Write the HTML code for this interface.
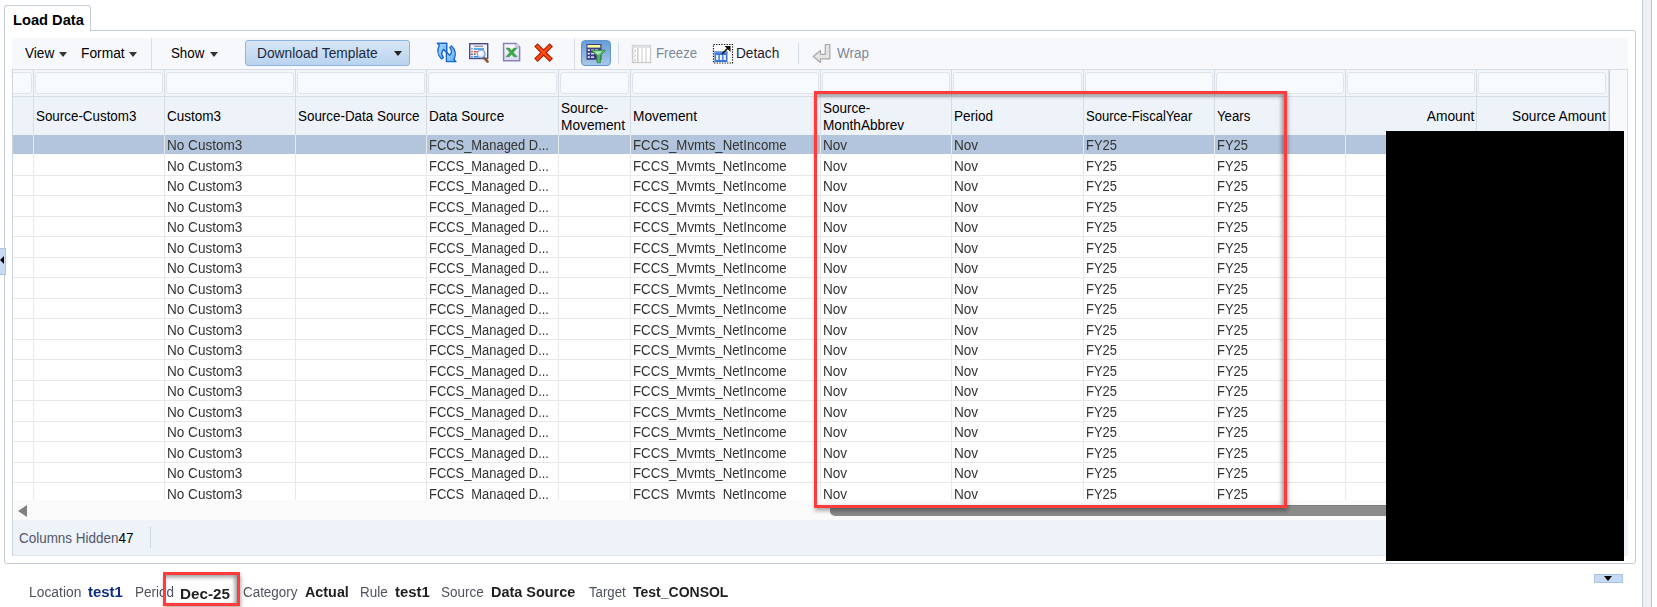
<!DOCTYPE html>
<html><head><meta charset="utf-8">
<style>
*{margin:0;padding:0;box-sizing:border-box}
html,body{width:1657px;height:607px;overflow:hidden;background:#fff;font-family:"Liberation Sans",sans-serif;font-size:13px;color:#000}
.a{position:absolute}
.t{position:absolute;white-space:nowrap;line-height:16px}
.vl{position:absolute;width:1px}
.hl{position:absolute;height:1px}
.arr{position:absolute;width:0;height:0;border-left:4.75px solid transparent;border-right:4.75px solid transparent;border-top:5.4px solid #333}
</style></head><body>

<div class="a" style="left:1642px;top:0;width:10px;height:607px;background:#edf1f6;border-left:1px solid #c6ced8;border-right:1px solid #b8c2cd"></div>
<div class="a" style="left:4px;top:30px;width:1632px;height:534px;border:1px solid #c5cdd7;border-radius:0 3px 3px 3px;background:#fff"></div>
<div class="a" style="left:4px;top:5px;width:87px;height:26px;border:1px solid #c5cdd7;border-bottom:none;border-radius:3px 3px 0 0;background:#fff"></div>
<div class="t" style="left:12.9px;top:12.15px;color:#000;font-size:14.0px;font-weight:bold;transform:scaleX(1.0464);transform-origin:0 0;">Load Data</div>
<div class="a" style="left:12px;top:38px;width:1616px;height:32px;background:#f7f8fb;border-radius:3px 3px 0 0"></div>
<div class="t" style="left:25px;top:45.15px;color:#000;font-size:14.0px;font-weight:normal;transform:scaleX(0.9714);transform-origin:0 0;">View</div>
<div class="arr" style="left:59px;top:52px"></div>
<div class="t" style="left:81px;top:45.15px;color:#000;font-size:14.0px;font-weight:normal;transform:scaleX(0.9857);transform-origin:0 0;">Format</div>
<div class="arr" style="left:129px;top:52px"></div>
<div class="vl" style="left:151px;top:38px;height:31px;background:#d8dee6"></div>
<div class="t" style="left:170.8px;top:45.15px;color:#000;font-size:14.0px;font-weight:normal;transform:scaleX(0.95);transform-origin:0 0;">Show</div>
<div class="arr" style="left:210px;top:52px"></div>
<div class="a" style="left:245px;top:40px;width:165px;height:26px;border:1px solid #8fb4dd;border-radius:3px;background:linear-gradient(#d7e6f6,#b9d3ef)"></div>
<div class="t" style="left:257px;top:45.15px;color:#1a2a40;font-size:14.0px;font-weight:normal;transform:scaleX(0.9829);transform-origin:0 0;">Download Template</div>
<div class="arr" style="left:394px;top:51px;border-top-color:#222"></div>
<div class="vl" style="left:574px;top:38px;height:31px;background:#d8dee6"></div>
<div class="a" style="left:581px;top:40px;width:30px;height:26px;border:1px solid #6196d0;border-radius:4px;background:linear-gradient(#679dd7,#a9c7e7)"></div>
<div class="vl" style="left:618px;top:43px;height:21px;background:#d5dde6"></div>
<div class="t" style="left:656px;top:45.15px;color:#7c8799;font-size:14.0px;font-weight:normal;transform:scaleX(0.9429);transform-origin:0 0;">Freeze</div>
<div class="t" style="left:736.3px;top:45.15px;color:#1b1b33;font-size:14.0px;font-weight:normal;transform:scaleX(0.9757);transform-origin:0 0;">Detach</div>
<div class="vl" style="left:798px;top:43px;height:21px;background:#d5dde6"></div>
<div class="t" style="left:836.5px;top:45.15px;color:#7c8799;font-size:14.0px;font-weight:normal;transform:scaleX(0.9621);transform-origin:0 0;">Wrap</div>
<svg class="a" style="left:435px;top:41px" width="24" height="23" viewBox="0 0 24 23">
<defs><linearGradient id="rg" x1="0" y1="0" x2="1" y2="1"><stop offset="0" stop-color="#b4dcff"/><stop offset="1" stop-color="#58aaf2"/></linearGradient></defs>
<path d="M2.3 2.3 H11.8 V11.8 L8.6 8.6 C6.2 11 6.3 14 8.4 16.4 L6.6 18 C2.4 14 2 8.5 4.3 4.3 Z" fill="url(#rg)" stroke="#1767cc" stroke-width="1.4" stroke-linejoin="round"/>
<path d="M20.9 20.6 H11.4 V11.1 L14.6 14.3 C17 11.9 16.9 8.9 14.8 6.5 L16.6 4.9 C20.8 8.9 21.2 14.4 18.9 18.6 Z" fill="url(#rg)" stroke="#1767cc" stroke-width="1.4" stroke-linejoin="round"/>
</svg>
<svg class="a" style="left:468px;top:42px" width="22" height="22" viewBox="0 0 22 22">
<rect x="1.7" y="1.7" width="18" height="14.8" fill="#f1f0fb" stroke="#4a4888" stroke-width="1.4"/>
<rect x="6" y="3.6" width="9" height="1.4" fill="#9a9a9a"/>
<rect x="3.2" y="6.3" width="1.5" height="1.3" fill="#2a8ce0"/><rect x="6" y="6.3" width="10" height="1.4" fill="#2a8ce0"/>
<rect x="3.2" y="9" width="1.5" height="1.3" fill="#f05a3a"/><rect x="6" y="9" width="4" height="1.4" fill="#f05a3a"/>
<rect x="3.2" y="11.5" width="1.5" height="1.3" fill="#333"/><rect x="6" y="11.5" width="1.5" height="1.3" fill="#333"/>
<rect x="3.2" y="14" width="1.5" height="1.3" fill="#2a8ce0"/><rect x="6" y="14" width="4" height="1.4" fill="#2a8ce0"/>
<defs><radialGradient id="mg" cx="0.4" cy="0.4" r="0.7"><stop offset="0" stop-color="#ffffff"/><stop offset="0.6" stop-color="#dfe9f8"/><stop offset="1" stop-color="#5b8fd6"/></radialGradient></defs>
<line x1="16" y1="15.8" x2="19.6" y2="19.6" stroke="#8d5634" stroke-width="2.6" stroke-linecap="round"/>
<circle cx="13.2" cy="12" r="4" fill="url(#mg)" stroke="#5d8fd4" stroke-width="0.8"/>
</svg>
<svg class="a" style="left:502px;top:42px" width="20" height="21" viewBox="0 0 20 21">
<defs><linearGradient id="xg" x1="0" y1="0" x2="0" y2="1"><stop offset="0" stop-color="#fafaff"/><stop offset="1" stop-color="#dcdcf0"/></linearGradient></defs>
<path d="M1.6 1.5 H14 L17.6 5 V18.8 H1.6 Z" fill="url(#xg)" stroke="#8682bd" stroke-width="1.5"/>
<path d="M14 1.5 V5 H17.6" fill="#fff" stroke="#8682bd" stroke-width="0.8"/>
<path d="M4 6 H7.3 L9.6 8.6 L11.9 6 H15.2 L11.3 10.4 L15.2 14.8 H11.9 L9.6 12.2 L7.3 14.8 H4 L7.9 10.4 Z" fill="#3caa48" stroke="#2d8a3a" stroke-width="0.5"/>
</svg>
<svg class="a" style="left:534px;top:43px" width="19" height="19" viewBox="0 0 19 19">
<path d="M3.6 3.6 L15.6 15.6 M15.6 3.6 L3.6 15.6" stroke="#b01800" stroke-width="4.8" stroke-linecap="square"/>
<path d="M3.6 3.6 L15.6 15.6 M15.6 3.6 L3.6 15.6" stroke="#ff4c0c" stroke-width="2.7" stroke-linecap="square"/>
</svg>
<svg class="a" style="left:585px;top:43px" width="22" height="22" viewBox="0 0 22 22">
<rect x="1.5" y="1" width="15" height="15.8" fill="#3e3d82"/>
<rect x="2.5" y="2" width="12.8" height="2.6" fill="#fdfd9a"/>
<rect x="2.8" y="6.3" width="2" height="1.6" fill="#fff"/><rect x="6" y="6.3" width="3" height="1.6" fill="#ddd"/><rect x="10" y="6.3" width="3" height="1.6" fill="#ddd"/>
<rect x="2.8" y="9.8" width="2" height="1.6" fill="#fff"/><rect x="6" y="9.8" width="3" height="1.6" fill="#ddd"/>
<rect x="2.8" y="13.3" width="2" height="1.6" fill="#fff"/><rect x="6" y="13.3" width="3" height="1.6" fill="#ddd"/>
<path d="M6 7.2 H20.6 L15.4 12.6 V19.8 H12 V12.6 Z" fill="#52b860" stroke="#2f8a40" stroke-width="0.8" stroke-linejoin="round"/>
<path d="M9 8.3 H17 L14 11.5 H12 Z" fill="#c8f0cc" opacity=".8"/>
</svg>
<svg class="a" style="left:631px;top:44px" width="21" height="20" viewBox="0 0 21 20">
<rect x="1.5" y="1.5" width="18" height="17" fill="#fff" stroke="#cacaca" stroke-width="1.3"/>
<rect x="1.5" y="1.5" width="18" height="2.5" fill="#e2e2e2"/>
<rect x="6" y="4" width="1.6" height="14.5" fill="#d0d0d0"/><rect x="10.3" y="4" width="1.3" height="14.5" fill="#d4d4d4"/><rect x="14.3" y="4" width="1.3" height="14.5" fill="#d4d4d4"/>
<path d="M2.5 5.5 L5 7 L2.5 8.5 M2.5 10 L5 11.5 L2.5 13 M2.5 14.5 L5 16 L2.5 17.5" fill="none" stroke="#bdbdbd" stroke-width="0.8"/>
</svg>
<svg class="a" style="left:712px;top:43px" width="22" height="21" viewBox="0 0 22 21">
<rect x="1.5" y="1.5" width="19" height="18.5" fill="#fff" stroke="#111" stroke-width="1.2" stroke-dasharray="1.3 1.3"/>
<rect x="2.5" y="8.5" width="13" height="10.5" fill="#3b74d8"/>
<rect x="2.5" y="8.5" width="13" height="1.8" fill="#5d90e8"/>
<rect x="4" y="12" width="2.4" height="5" fill="#e9f0ff"/><rect x="7.8" y="12" width="2.4" height="5" fill="#e9f0ff"/><rect x="11.5" y="12" width="2.4" height="5" fill="#e9f0ff"/>
<path d="M10 11 L16.5 4.5" stroke="#111" stroke-width="1.6"/>
<path d="M12.5 3 H18.5 V9 Z" fill="#111"/>
</svg>
<svg class="a" style="left:812px;top:43px" width="20" height="21" viewBox="0 0 20 21">
<path d="M13.3 1.5 H17.8 V15.8 H8.5 V19.5 L1.2 13.5 L8.5 7.5 V11.3 H13.3 Z" fill="#e4e4e4" stroke="#a8a8a8" stroke-width="1.2" stroke-linejoin="round"/>
</svg>
<div class="a" style="left:12px;top:69px;width:1616px;height:28px;background:#f2f5fa;border-top:1px solid #d6dde5;border-bottom:1px solid #d6dde5"></div>
<div class="a" style="left:12px;top:97px;width:1597px;height:38px;background:#eef2f9"></div>
<div class="a" style="left:1610px;top:70px;width:18px;height:430px;background:#f7f9fc;border-right:1px solid #d6dde5"></div>
<div class="vl" style="left:12px;top:69px;height:487px;background:#cdd6e0"></div>
<div class="a" style="left:5px;top:72px;width:27px;height:22px;background:#f8fbfe;border:1px solid #dfe4ea;border-radius:3px"></div>
<div class="a" style="left:35px;top:72px;width:128px;height:22px;background:#f8fbfe;border:1px solid #dfe4ea;border-radius:3px"></div>
<div class="a" style="left:166px;top:72px;width:128px;height:22px;background:#f8fbfe;border:1px solid #dfe4ea;border-radius:3px"></div>
<div class="a" style="left:297px;top:72px;width:128px;height:22px;background:#f8fbfe;border:1px solid #dfe4ea;border-radius:3px"></div>
<div class="a" style="left:428px;top:72px;width:129px;height:22px;background:#f8fbfe;border:1px solid #dfe4ea;border-radius:3px"></div>
<div class="a" style="left:560px;top:72px;width:69px;height:22px;background:#f8fbfe;border:1px solid #dfe4ea;border-radius:3px"></div>
<div class="a" style="left:632px;top:72px;width:187px;height:22px;background:#f8fbfe;border:1px solid #dfe4ea;border-radius:3px"></div>
<div class="a" style="left:822px;top:72px;width:128px;height:22px;background:#f8fbfe;border:1px solid #dfe4ea;border-radius:3px"></div>
<div class="a" style="left:953px;top:72px;width:129px;height:22px;background:#f8fbfe;border:1px solid #dfe4ea;border-radius:3px"></div>
<div class="a" style="left:1085px;top:72px;width:128px;height:22px;background:#f8fbfe;border:1px solid #dfe4ea;border-radius:3px"></div>
<div class="a" style="left:1216px;top:72px;width:128px;height:22px;background:#f8fbfe;border:1px solid #dfe4ea;border-radius:3px"></div>
<div class="a" style="left:1347px;top:72px;width:128px;height:22px;background:#f8fbfe;border:1px solid #dfe4ea;border-radius:3px"></div>
<div class="a" style="left:1478px;top:72px;width:128px;height:22px;background:#f8fbfe;border:1px solid #dfe4ea;border-radius:3px"></div>
<div class="a" style="left:5px;top:70px;width:7px;height:27px;background:#fff"></div>
<div class="vl" style="left:12px;top:69px;height:487px;background:#cdd6e0"></div>
<div class="a" style="left:13px;top:135px;width:1596px;height:365px;background:#fff"></div>
<div class="a" style="left:13px;top:134.5px;width:1596px;height:19.5px;background:#b3c5dc"></div>
<div class="hl" style="left:13px;top:174.9px;width:1596px;background:#e8e8e8"></div>
<div class="hl" style="left:13px;top:195.4px;width:1596px;background:#e8e8e8"></div>
<div class="hl" style="left:13px;top:215.9px;width:1596px;background:#e8e8e8"></div>
<div class="hl" style="left:13px;top:236.4px;width:1596px;background:#e8e8e8"></div>
<div class="hl" style="left:13px;top:256.9px;width:1596px;background:#e8e8e8"></div>
<div class="hl" style="left:13px;top:277.4px;width:1596px;background:#e8e8e8"></div>
<div class="hl" style="left:13px;top:297.9px;width:1596px;background:#e8e8e8"></div>
<div class="hl" style="left:13px;top:318.4px;width:1596px;background:#e8e8e8"></div>
<div class="hl" style="left:13px;top:338.9px;width:1596px;background:#e8e8e8"></div>
<div class="hl" style="left:13px;top:359.4px;width:1596px;background:#e8e8e8"></div>
<div class="hl" style="left:13px;top:379.9px;width:1596px;background:#e8e8e8"></div>
<div class="hl" style="left:13px;top:400.4px;width:1596px;background:#e8e8e8"></div>
<div class="hl" style="left:13px;top:420.9px;width:1596px;background:#e8e8e8"></div>
<div class="hl" style="left:13px;top:441.4px;width:1596px;background:#e8e8e8"></div>
<div class="hl" style="left:13px;top:461.9px;width:1596px;background:#e8e8e8"></div>
<div class="hl" style="left:13px;top:482.4px;width:1596px;background:#e8e8e8"></div>
<div class="hl" style="left:13px;top:502.9px;width:1596px;background:#e8e8e8"></div>
<div class="vl" style="left:33px;top:70px;height:65px;background:#d6dde5"></div>
<div class="vl" style="left:33px;top:135px;height:365px;background:#e8e8e8"></div>
<div class="vl" style="left:164px;top:70px;height:65px;background:#d6dde5"></div>
<div class="vl" style="left:164px;top:135px;height:365px;background:#e8e8e8"></div>
<div class="vl" style="left:295px;top:70px;height:65px;background:#d6dde5"></div>
<div class="vl" style="left:295px;top:135px;height:365px;background:#e8e8e8"></div>
<div class="vl" style="left:426px;top:70px;height:65px;background:#d6dde5"></div>
<div class="vl" style="left:426px;top:135px;height:365px;background:#e8e8e8"></div>
<div class="vl" style="left:558px;top:70px;height:65px;background:#d6dde5"></div>
<div class="vl" style="left:558px;top:135px;height:365px;background:#e8e8e8"></div>
<div class="vl" style="left:630px;top:70px;height:65px;background:#d6dde5"></div>
<div class="vl" style="left:630px;top:135px;height:365px;background:#e8e8e8"></div>
<div class="vl" style="left:820px;top:70px;height:65px;background:#d6dde5"></div>
<div class="vl" style="left:820px;top:135px;height:365px;background:#e8e8e8"></div>
<div class="vl" style="left:951px;top:70px;height:65px;background:#d6dde5"></div>
<div class="vl" style="left:951px;top:135px;height:365px;background:#e8e8e8"></div>
<div class="vl" style="left:1083px;top:70px;height:65px;background:#d6dde5"></div>
<div class="vl" style="left:1083px;top:135px;height:365px;background:#e8e8e8"></div>
<div class="vl" style="left:1214px;top:70px;height:65px;background:#d6dde5"></div>
<div class="vl" style="left:1214px;top:135px;height:365px;background:#e8e8e8"></div>
<div class="vl" style="left:1345px;top:70px;height:65px;background:#d6dde5"></div>
<div class="vl" style="left:1345px;top:135px;height:365px;background:#e8e8e8"></div>
<div class="vl" style="left:1476px;top:70px;height:65px;background:#d6dde5"></div>
<div class="vl" style="left:1476px;top:135px;height:365px;background:#e8e8e8"></div>
<div class="vl" style="left:1609px;top:70px;height:65px;background:#d6dde5"></div>
<div class="vl" style="left:1609px;top:135px;height:365px;background:#e8e8e8"></div>
<div class="vl" style="left:1609px;top:70px;height:430px;background:#c8d0d9"></div>
<div class="vl" style="left:1608px;top:70px;height:430px;background:#dde3ea"></div>
<div class="t" style="left:36.0px;top:108.15px;color:#000;font-size:14.0px;font-weight:normal;transform:scaleX(0.9557);transform-origin:0 0;">Source-Custom3</div>
<div class="t" style="left:167.0px;top:108.15px;color:#000;font-size:14.0px;font-weight:normal;transform:scaleX(0.965);transform-origin:0 0;">Custom3</div>
<div class="t" style="left:298.0px;top:108.15px;color:#000;font-size:14.0px;font-weight:normal;transform:scaleX(0.9571);transform-origin:0 0;">Source-Data Source</div>
<div class="t" style="left:429.0px;top:108.15px;color:#000;font-size:14.0px;font-weight:normal;transform:scaleX(0.9657);transform-origin:0 0;">Data Source</div>
<div class="t" style="left:561.0px;top:100.15px;color:#000;font-size:14.0px;font-weight:normal;transform:scaleX(0.9643);transform-origin:0 0;">Source-</div>
<div class="t" style="left:561.0px;top:116.95px;color:#000;font-size:14.0px;font-weight:normal;transform:scaleX(0.9786);transform-origin:0 0;">Movement</div>
<div class="t" style="left:633.0px;top:108.15px;color:#000;font-size:14.0px;font-weight:normal;transform:scaleX(0.9786);transform-origin:0 0;">Movement</div>
<div class="t" style="left:823.0px;top:100.15px;color:#000;font-size:14.0px;font-weight:normal;transform:scaleX(0.9643);transform-origin:0 0;">Source-</div>
<div class="t" style="left:823.0px;top:116.95px;color:#000;font-size:14.0px;font-weight:normal;transform:scaleX(0.9743);transform-origin:0 0;">MonthAbbrev</div>
<div class="t" style="left:954.0px;top:108.15px;color:#000;font-size:14.0px;font-weight:normal;transform:scaleX(0.9664);transform-origin:0 0;">Period</div>
<div class="t" style="left:1086.0px;top:108.15px;color:#000;font-size:14.0px;font-weight:normal;transform:scaleX(0.9329);transform-origin:0 0;">Source-FiscalYear</div>
<div class="t" style="left:1217.0px;top:108.15px;color:#000;font-size:14.0px;font-weight:normal;transform:scaleX(0.945);transform-origin:0 0;">Years</div>
<div class="t" style="right:182.5px;top:108.15px;color:#000;font-size:14.0px;font-weight:normal;transform:scaleX(0.9857);transform-origin:100% 0;">Amount</div>
<div class="t" style="right:51.5px;top:108.15px;color:#000;font-size:14.0px;font-weight:normal;transform:scaleX(0.9779);transform-origin:100% 0;">Source Amount</div>
<div class="a" style="left:0;top:0;width:1657px;height:607px;will-change:transform">
<div class="t" style="left:167.0px;top:137.15px;color:#333;font-size:14.0px;font-weight:normal;transform:scaleX(0.9686);transform-origin:0 0;">No Custom3</div>
<div class="t" style="left:429.0px;top:137.15px;color:#333;font-size:14.0px;font-weight:normal;transform:scaleX(0.9229);transform-origin:0 0;">FCCS_Managed D...</div>
<div class="t" style="left:633.0px;top:137.15px;color:#333;font-size:14.0px;font-weight:normal;transform:scaleX(0.945);transform-origin:0 0;">FCCS_Mvmts_NetIncome</div>
<div class="t" style="left:823.0px;top:137.15px;color:#333;font-size:14.0px;font-weight:normal;transform:scaleX(0.9707);transform-origin:0 0;">Nov</div>
<div class="t" style="left:954.0px;top:137.15px;color:#333;font-size:14.0px;font-weight:normal;transform:scaleX(0.9707);transform-origin:0 0;">Nov</div>
<div class="t" style="left:1086.0px;top:137.15px;color:#333;font-size:14.0px;font-weight:normal;transform:scaleX(0.9214);transform-origin:0 0;">FY25</div>
<div class="t" style="left:1217.0px;top:137.15px;color:#333;font-size:14.0px;font-weight:normal;transform:scaleX(0.9214);transform-origin:0 0;">FY25</div>
<div class="t" style="left:167.0px;top:157.65px;color:#333;font-size:14.0px;font-weight:normal;transform:scaleX(0.9686);transform-origin:0 0;">No Custom3</div>
<div class="t" style="left:429.0px;top:157.65px;color:#333;font-size:14.0px;font-weight:normal;transform:scaleX(0.9229);transform-origin:0 0;">FCCS_Managed D...</div>
<div class="t" style="left:633.0px;top:157.65px;color:#333;font-size:14.0px;font-weight:normal;transform:scaleX(0.945);transform-origin:0 0;">FCCS_Mvmts_NetIncome</div>
<div class="t" style="left:823.0px;top:157.65px;color:#333;font-size:14.0px;font-weight:normal;transform:scaleX(0.9707);transform-origin:0 0;">Nov</div>
<div class="t" style="left:954.0px;top:157.65px;color:#333;font-size:14.0px;font-weight:normal;transform:scaleX(0.9707);transform-origin:0 0;">Nov</div>
<div class="t" style="left:1086.0px;top:157.65px;color:#333;font-size:14.0px;font-weight:normal;transform:scaleX(0.9214);transform-origin:0 0;">FY25</div>
<div class="t" style="left:1217.0px;top:157.65px;color:#333;font-size:14.0px;font-weight:normal;transform:scaleX(0.9214);transform-origin:0 0;">FY25</div>
<div class="t" style="left:167.0px;top:178.15px;color:#333;font-size:14.0px;font-weight:normal;transform:scaleX(0.9686);transform-origin:0 0;">No Custom3</div>
<div class="t" style="left:429.0px;top:178.15px;color:#333;font-size:14.0px;font-weight:normal;transform:scaleX(0.9229);transform-origin:0 0;">FCCS_Managed D...</div>
<div class="t" style="left:633.0px;top:178.15px;color:#333;font-size:14.0px;font-weight:normal;transform:scaleX(0.945);transform-origin:0 0;">FCCS_Mvmts_NetIncome</div>
<div class="t" style="left:823.0px;top:178.15px;color:#333;font-size:14.0px;font-weight:normal;transform:scaleX(0.9707);transform-origin:0 0;">Nov</div>
<div class="t" style="left:954.0px;top:178.15px;color:#333;font-size:14.0px;font-weight:normal;transform:scaleX(0.9707);transform-origin:0 0;">Nov</div>
<div class="t" style="left:1086.0px;top:178.15px;color:#333;font-size:14.0px;font-weight:normal;transform:scaleX(0.9214);transform-origin:0 0;">FY25</div>
<div class="t" style="left:1217.0px;top:178.15px;color:#333;font-size:14.0px;font-weight:normal;transform:scaleX(0.9214);transform-origin:0 0;">FY25</div>
<div class="t" style="left:167.0px;top:198.65px;color:#333;font-size:14.0px;font-weight:normal;transform:scaleX(0.9686);transform-origin:0 0;">No Custom3</div>
<div class="t" style="left:429.0px;top:198.65px;color:#333;font-size:14.0px;font-weight:normal;transform:scaleX(0.9229);transform-origin:0 0;">FCCS_Managed D...</div>
<div class="t" style="left:633.0px;top:198.65px;color:#333;font-size:14.0px;font-weight:normal;transform:scaleX(0.945);transform-origin:0 0;">FCCS_Mvmts_NetIncome</div>
<div class="t" style="left:823.0px;top:198.65px;color:#333;font-size:14.0px;font-weight:normal;transform:scaleX(0.9707);transform-origin:0 0;">Nov</div>
<div class="t" style="left:954.0px;top:198.65px;color:#333;font-size:14.0px;font-weight:normal;transform:scaleX(0.9707);transform-origin:0 0;">Nov</div>
<div class="t" style="left:1086.0px;top:198.65px;color:#333;font-size:14.0px;font-weight:normal;transform:scaleX(0.9214);transform-origin:0 0;">FY25</div>
<div class="t" style="left:1217.0px;top:198.65px;color:#333;font-size:14.0px;font-weight:normal;transform:scaleX(0.9214);transform-origin:0 0;">FY25</div>
<div class="t" style="left:167.0px;top:219.15px;color:#333;font-size:14.0px;font-weight:normal;transform:scaleX(0.9686);transform-origin:0 0;">No Custom3</div>
<div class="t" style="left:429.0px;top:219.15px;color:#333;font-size:14.0px;font-weight:normal;transform:scaleX(0.9229);transform-origin:0 0;">FCCS_Managed D...</div>
<div class="t" style="left:633.0px;top:219.15px;color:#333;font-size:14.0px;font-weight:normal;transform:scaleX(0.945);transform-origin:0 0;">FCCS_Mvmts_NetIncome</div>
<div class="t" style="left:823.0px;top:219.15px;color:#333;font-size:14.0px;font-weight:normal;transform:scaleX(0.9707);transform-origin:0 0;">Nov</div>
<div class="t" style="left:954.0px;top:219.15px;color:#333;font-size:14.0px;font-weight:normal;transform:scaleX(0.9707);transform-origin:0 0;">Nov</div>
<div class="t" style="left:1086.0px;top:219.15px;color:#333;font-size:14.0px;font-weight:normal;transform:scaleX(0.9214);transform-origin:0 0;">FY25</div>
<div class="t" style="left:1217.0px;top:219.15px;color:#333;font-size:14.0px;font-weight:normal;transform:scaleX(0.9214);transform-origin:0 0;">FY25</div>
<div class="t" style="left:167.0px;top:239.65px;color:#333;font-size:14.0px;font-weight:normal;transform:scaleX(0.9686);transform-origin:0 0;">No Custom3</div>
<div class="t" style="left:429.0px;top:239.65px;color:#333;font-size:14.0px;font-weight:normal;transform:scaleX(0.9229);transform-origin:0 0;">FCCS_Managed D...</div>
<div class="t" style="left:633.0px;top:239.65px;color:#333;font-size:14.0px;font-weight:normal;transform:scaleX(0.945);transform-origin:0 0;">FCCS_Mvmts_NetIncome</div>
<div class="t" style="left:823.0px;top:239.65px;color:#333;font-size:14.0px;font-weight:normal;transform:scaleX(0.9707);transform-origin:0 0;">Nov</div>
<div class="t" style="left:954.0px;top:239.65px;color:#333;font-size:14.0px;font-weight:normal;transform:scaleX(0.9707);transform-origin:0 0;">Nov</div>
<div class="t" style="left:1086.0px;top:239.65px;color:#333;font-size:14.0px;font-weight:normal;transform:scaleX(0.9214);transform-origin:0 0;">FY25</div>
<div class="t" style="left:1217.0px;top:239.65px;color:#333;font-size:14.0px;font-weight:normal;transform:scaleX(0.9214);transform-origin:0 0;">FY25</div>
<div class="t" style="left:167.0px;top:260.15px;color:#333;font-size:14.0px;font-weight:normal;transform:scaleX(0.9686);transform-origin:0 0;">No Custom3</div>
<div class="t" style="left:429.0px;top:260.15px;color:#333;font-size:14.0px;font-weight:normal;transform:scaleX(0.9229);transform-origin:0 0;">FCCS_Managed D...</div>
<div class="t" style="left:633.0px;top:260.15px;color:#333;font-size:14.0px;font-weight:normal;transform:scaleX(0.945);transform-origin:0 0;">FCCS_Mvmts_NetIncome</div>
<div class="t" style="left:823.0px;top:260.15px;color:#333;font-size:14.0px;font-weight:normal;transform:scaleX(0.9707);transform-origin:0 0;">Nov</div>
<div class="t" style="left:954.0px;top:260.15px;color:#333;font-size:14.0px;font-weight:normal;transform:scaleX(0.9707);transform-origin:0 0;">Nov</div>
<div class="t" style="left:1086.0px;top:260.15px;color:#333;font-size:14.0px;font-weight:normal;transform:scaleX(0.9214);transform-origin:0 0;">FY25</div>
<div class="t" style="left:1217.0px;top:260.15px;color:#333;font-size:14.0px;font-weight:normal;transform:scaleX(0.9214);transform-origin:0 0;">FY25</div>
<div class="t" style="left:167.0px;top:280.65px;color:#333;font-size:14.0px;font-weight:normal;transform:scaleX(0.9686);transform-origin:0 0;">No Custom3</div>
<div class="t" style="left:429.0px;top:280.65px;color:#333;font-size:14.0px;font-weight:normal;transform:scaleX(0.9229);transform-origin:0 0;">FCCS_Managed D...</div>
<div class="t" style="left:633.0px;top:280.65px;color:#333;font-size:14.0px;font-weight:normal;transform:scaleX(0.945);transform-origin:0 0;">FCCS_Mvmts_NetIncome</div>
<div class="t" style="left:823.0px;top:280.65px;color:#333;font-size:14.0px;font-weight:normal;transform:scaleX(0.9707);transform-origin:0 0;">Nov</div>
<div class="t" style="left:954.0px;top:280.65px;color:#333;font-size:14.0px;font-weight:normal;transform:scaleX(0.9707);transform-origin:0 0;">Nov</div>
<div class="t" style="left:1086.0px;top:280.65px;color:#333;font-size:14.0px;font-weight:normal;transform:scaleX(0.9214);transform-origin:0 0;">FY25</div>
<div class="t" style="left:1217.0px;top:280.65px;color:#333;font-size:14.0px;font-weight:normal;transform:scaleX(0.9214);transform-origin:0 0;">FY25</div>
<div class="t" style="left:167.0px;top:301.15px;color:#333;font-size:14.0px;font-weight:normal;transform:scaleX(0.9686);transform-origin:0 0;">No Custom3</div>
<div class="t" style="left:429.0px;top:301.15px;color:#333;font-size:14.0px;font-weight:normal;transform:scaleX(0.9229);transform-origin:0 0;">FCCS_Managed D...</div>
<div class="t" style="left:633.0px;top:301.15px;color:#333;font-size:14.0px;font-weight:normal;transform:scaleX(0.945);transform-origin:0 0;">FCCS_Mvmts_NetIncome</div>
<div class="t" style="left:823.0px;top:301.15px;color:#333;font-size:14.0px;font-weight:normal;transform:scaleX(0.9707);transform-origin:0 0;">Nov</div>
<div class="t" style="left:954.0px;top:301.15px;color:#333;font-size:14.0px;font-weight:normal;transform:scaleX(0.9707);transform-origin:0 0;">Nov</div>
<div class="t" style="left:1086.0px;top:301.15px;color:#333;font-size:14.0px;font-weight:normal;transform:scaleX(0.9214);transform-origin:0 0;">FY25</div>
<div class="t" style="left:1217.0px;top:301.15px;color:#333;font-size:14.0px;font-weight:normal;transform:scaleX(0.9214);transform-origin:0 0;">FY25</div>
<div class="t" style="left:167.0px;top:321.65px;color:#333;font-size:14.0px;font-weight:normal;transform:scaleX(0.9686);transform-origin:0 0;">No Custom3</div>
<div class="t" style="left:429.0px;top:321.65px;color:#333;font-size:14.0px;font-weight:normal;transform:scaleX(0.9229);transform-origin:0 0;">FCCS_Managed D...</div>
<div class="t" style="left:633.0px;top:321.65px;color:#333;font-size:14.0px;font-weight:normal;transform:scaleX(0.945);transform-origin:0 0;">FCCS_Mvmts_NetIncome</div>
<div class="t" style="left:823.0px;top:321.65px;color:#333;font-size:14.0px;font-weight:normal;transform:scaleX(0.9707);transform-origin:0 0;">Nov</div>
<div class="t" style="left:954.0px;top:321.65px;color:#333;font-size:14.0px;font-weight:normal;transform:scaleX(0.9707);transform-origin:0 0;">Nov</div>
<div class="t" style="left:1086.0px;top:321.65px;color:#333;font-size:14.0px;font-weight:normal;transform:scaleX(0.9214);transform-origin:0 0;">FY25</div>
<div class="t" style="left:1217.0px;top:321.65px;color:#333;font-size:14.0px;font-weight:normal;transform:scaleX(0.9214);transform-origin:0 0;">FY25</div>
<div class="t" style="left:167.0px;top:342.15px;color:#333;font-size:14.0px;font-weight:normal;transform:scaleX(0.9686);transform-origin:0 0;">No Custom3</div>
<div class="t" style="left:429.0px;top:342.15px;color:#333;font-size:14.0px;font-weight:normal;transform:scaleX(0.9229);transform-origin:0 0;">FCCS_Managed D...</div>
<div class="t" style="left:633.0px;top:342.15px;color:#333;font-size:14.0px;font-weight:normal;transform:scaleX(0.945);transform-origin:0 0;">FCCS_Mvmts_NetIncome</div>
<div class="t" style="left:823.0px;top:342.15px;color:#333;font-size:14.0px;font-weight:normal;transform:scaleX(0.9707);transform-origin:0 0;">Nov</div>
<div class="t" style="left:954.0px;top:342.15px;color:#333;font-size:14.0px;font-weight:normal;transform:scaleX(0.9707);transform-origin:0 0;">Nov</div>
<div class="t" style="left:1086.0px;top:342.15px;color:#333;font-size:14.0px;font-weight:normal;transform:scaleX(0.9214);transform-origin:0 0;">FY25</div>
<div class="t" style="left:1217.0px;top:342.15px;color:#333;font-size:14.0px;font-weight:normal;transform:scaleX(0.9214);transform-origin:0 0;">FY25</div>
<div class="t" style="left:167.0px;top:362.65px;color:#333;font-size:14.0px;font-weight:normal;transform:scaleX(0.9686);transform-origin:0 0;">No Custom3</div>
<div class="t" style="left:429.0px;top:362.65px;color:#333;font-size:14.0px;font-weight:normal;transform:scaleX(0.9229);transform-origin:0 0;">FCCS_Managed D...</div>
<div class="t" style="left:633.0px;top:362.65px;color:#333;font-size:14.0px;font-weight:normal;transform:scaleX(0.945);transform-origin:0 0;">FCCS_Mvmts_NetIncome</div>
<div class="t" style="left:823.0px;top:362.65px;color:#333;font-size:14.0px;font-weight:normal;transform:scaleX(0.9707);transform-origin:0 0;">Nov</div>
<div class="t" style="left:954.0px;top:362.65px;color:#333;font-size:14.0px;font-weight:normal;transform:scaleX(0.9707);transform-origin:0 0;">Nov</div>
<div class="t" style="left:1086.0px;top:362.65px;color:#333;font-size:14.0px;font-weight:normal;transform:scaleX(0.9214);transform-origin:0 0;">FY25</div>
<div class="t" style="left:1217.0px;top:362.65px;color:#333;font-size:14.0px;font-weight:normal;transform:scaleX(0.9214);transform-origin:0 0;">FY25</div>
<div class="t" style="left:167.0px;top:383.15px;color:#333;font-size:14.0px;font-weight:normal;transform:scaleX(0.9686);transform-origin:0 0;">No Custom3</div>
<div class="t" style="left:429.0px;top:383.15px;color:#333;font-size:14.0px;font-weight:normal;transform:scaleX(0.9229);transform-origin:0 0;">FCCS_Managed D...</div>
<div class="t" style="left:633.0px;top:383.15px;color:#333;font-size:14.0px;font-weight:normal;transform:scaleX(0.945);transform-origin:0 0;">FCCS_Mvmts_NetIncome</div>
<div class="t" style="left:823.0px;top:383.15px;color:#333;font-size:14.0px;font-weight:normal;transform:scaleX(0.9707);transform-origin:0 0;">Nov</div>
<div class="t" style="left:954.0px;top:383.15px;color:#333;font-size:14.0px;font-weight:normal;transform:scaleX(0.9707);transform-origin:0 0;">Nov</div>
<div class="t" style="left:1086.0px;top:383.15px;color:#333;font-size:14.0px;font-weight:normal;transform:scaleX(0.9214);transform-origin:0 0;">FY25</div>
<div class="t" style="left:1217.0px;top:383.15px;color:#333;font-size:14.0px;font-weight:normal;transform:scaleX(0.9214);transform-origin:0 0;">FY25</div>
<div class="t" style="left:167.0px;top:403.65px;color:#333;font-size:14.0px;font-weight:normal;transform:scaleX(0.9686);transform-origin:0 0;">No Custom3</div>
<div class="t" style="left:429.0px;top:403.65px;color:#333;font-size:14.0px;font-weight:normal;transform:scaleX(0.9229);transform-origin:0 0;">FCCS_Managed D...</div>
<div class="t" style="left:633.0px;top:403.65px;color:#333;font-size:14.0px;font-weight:normal;transform:scaleX(0.945);transform-origin:0 0;">FCCS_Mvmts_NetIncome</div>
<div class="t" style="left:823.0px;top:403.65px;color:#333;font-size:14.0px;font-weight:normal;transform:scaleX(0.9707);transform-origin:0 0;">Nov</div>
<div class="t" style="left:954.0px;top:403.65px;color:#333;font-size:14.0px;font-weight:normal;transform:scaleX(0.9707);transform-origin:0 0;">Nov</div>
<div class="t" style="left:1086.0px;top:403.65px;color:#333;font-size:14.0px;font-weight:normal;transform:scaleX(0.9214);transform-origin:0 0;">FY25</div>
<div class="t" style="left:1217.0px;top:403.65px;color:#333;font-size:14.0px;font-weight:normal;transform:scaleX(0.9214);transform-origin:0 0;">FY25</div>
<div class="t" style="left:167.0px;top:424.15px;color:#333;font-size:14.0px;font-weight:normal;transform:scaleX(0.9686);transform-origin:0 0;">No Custom3</div>
<div class="t" style="left:429.0px;top:424.15px;color:#333;font-size:14.0px;font-weight:normal;transform:scaleX(0.9229);transform-origin:0 0;">FCCS_Managed D...</div>
<div class="t" style="left:633.0px;top:424.15px;color:#333;font-size:14.0px;font-weight:normal;transform:scaleX(0.945);transform-origin:0 0;">FCCS_Mvmts_NetIncome</div>
<div class="t" style="left:823.0px;top:424.15px;color:#333;font-size:14.0px;font-weight:normal;transform:scaleX(0.9707);transform-origin:0 0;">Nov</div>
<div class="t" style="left:954.0px;top:424.15px;color:#333;font-size:14.0px;font-weight:normal;transform:scaleX(0.9707);transform-origin:0 0;">Nov</div>
<div class="t" style="left:1086.0px;top:424.15px;color:#333;font-size:14.0px;font-weight:normal;transform:scaleX(0.9214);transform-origin:0 0;">FY25</div>
<div class="t" style="left:1217.0px;top:424.15px;color:#333;font-size:14.0px;font-weight:normal;transform:scaleX(0.9214);transform-origin:0 0;">FY25</div>
<div class="t" style="left:167.0px;top:444.65px;color:#333;font-size:14.0px;font-weight:normal;transform:scaleX(0.9686);transform-origin:0 0;">No Custom3</div>
<div class="t" style="left:429.0px;top:444.65px;color:#333;font-size:14.0px;font-weight:normal;transform:scaleX(0.9229);transform-origin:0 0;">FCCS_Managed D...</div>
<div class="t" style="left:633.0px;top:444.65px;color:#333;font-size:14.0px;font-weight:normal;transform:scaleX(0.945);transform-origin:0 0;">FCCS_Mvmts_NetIncome</div>
<div class="t" style="left:823.0px;top:444.65px;color:#333;font-size:14.0px;font-weight:normal;transform:scaleX(0.9707);transform-origin:0 0;">Nov</div>
<div class="t" style="left:954.0px;top:444.65px;color:#333;font-size:14.0px;font-weight:normal;transform:scaleX(0.9707);transform-origin:0 0;">Nov</div>
<div class="t" style="left:1086.0px;top:444.65px;color:#333;font-size:14.0px;font-weight:normal;transform:scaleX(0.9214);transform-origin:0 0;">FY25</div>
<div class="t" style="left:1217.0px;top:444.65px;color:#333;font-size:14.0px;font-weight:normal;transform:scaleX(0.9214);transform-origin:0 0;">FY25</div>
<div class="t" style="left:167.0px;top:465.15px;color:#333;font-size:14.0px;font-weight:normal;transform:scaleX(0.9686);transform-origin:0 0;">No Custom3</div>
<div class="t" style="left:429.0px;top:465.15px;color:#333;font-size:14.0px;font-weight:normal;transform:scaleX(0.9229);transform-origin:0 0;">FCCS_Managed D...</div>
<div class="t" style="left:633.0px;top:465.15px;color:#333;font-size:14.0px;font-weight:normal;transform:scaleX(0.945);transform-origin:0 0;">FCCS_Mvmts_NetIncome</div>
<div class="t" style="left:823.0px;top:465.15px;color:#333;font-size:14.0px;font-weight:normal;transform:scaleX(0.9707);transform-origin:0 0;">Nov</div>
<div class="t" style="left:954.0px;top:465.15px;color:#333;font-size:14.0px;font-weight:normal;transform:scaleX(0.9707);transform-origin:0 0;">Nov</div>
<div class="t" style="left:1086.0px;top:465.15px;color:#333;font-size:14.0px;font-weight:normal;transform:scaleX(0.9214);transform-origin:0 0;">FY25</div>
<div class="t" style="left:1217.0px;top:465.15px;color:#333;font-size:14.0px;font-weight:normal;transform:scaleX(0.9214);transform-origin:0 0;">FY25</div>
<div class="t" style="left:167.0px;top:485.65px;color:#333;font-size:14.0px;font-weight:normal;transform:scaleX(0.9686);transform-origin:0 0;">No Custom3</div>
<div class="t" style="left:429.0px;top:485.65px;color:#333;font-size:14.0px;font-weight:normal;transform:scaleX(0.9229);transform-origin:0 0;">FCCS_Managed D...</div>
<div class="t" style="left:633.0px;top:485.65px;color:#333;font-size:14.0px;font-weight:normal;transform:scaleX(0.945);transform-origin:0 0;">FCCS_Mvmts_NetIncome</div>
<div class="t" style="left:823.0px;top:485.65px;color:#333;font-size:14.0px;font-weight:normal;transform:scaleX(0.9707);transform-origin:0 0;">Nov</div>
<div class="t" style="left:954.0px;top:485.65px;color:#333;font-size:14.0px;font-weight:normal;transform:scaleX(0.9707);transform-origin:0 0;">Nov</div>
<div class="t" style="left:1086.0px;top:485.65px;color:#333;font-size:14.0px;font-weight:normal;transform:scaleX(0.9214);transform-origin:0 0;">FY25</div>
<div class="t" style="left:1217.0px;top:485.65px;color:#333;font-size:14.0px;font-weight:normal;transform:scaleX(0.9214);transform-origin:0 0;">FY25</div>
</div>
<div class="a" style="left:13px;top:500px;width:1615px;height:20px;background:#fafafa"></div>
<div class="a" style="left:18px;top:505px;width:0;height:0;border-top:6px solid transparent;border-bottom:6px solid transparent;border-right:9px solid #808080"></div>
<div class="a" style="left:830px;top:505px;width:600px;height:11px;border-radius:5px;background:#8a8a8a;border-top:1px solid #7c7c7c"></div>
<div class="a" style="left:12px;top:520px;width:1616px;height:36px;background:#eef2f9;border-radius:0 0 3px 3px;border-bottom:1px solid #dfe5ec;border-left:1px solid #cdd6e0"></div>
<div class="t" style="left:19px;top:530.15px;color:#4f566b;font-size:14.0px;font-weight:normal;transform:scaleX(0.9607);transform-origin:0 0;">Columns Hidden<span style="color:#000">47</span></div>
<div class="vl" style="left:150px;top:527px;height:21px;background:#d0d8e1"></div>
<div class="a" style="left:1386px;top:131px;width:238px;height:430px;background:#000"></div>
<div class="a" style="left:814px;top:91px;width:473px;height:417px;border:3px solid #ff3b3b;box-shadow:1px 3px 4px rgba(0,0,0,.32), inset -2px 2px 4px rgba(0,0,0,.42)"></div>
<div class="a" style="left:-1px;top:248px;width:7px;height:27px;background:#c6daf1;border:1px solid #a9c3e0"></div>
<div class="a" style="left:0;top:256px;width:0;height:0;border-top:4.5px solid transparent;border-bottom:4.5px solid transparent;border-right:4px solid #000"></div>
<div class="t" style="left:29px;top:584.15px;color:#4d525c;font-size:14.0px;font-weight:normal;transform:scaleX(0.9893);transform-origin:0 0;">Location</div>
<div class="t" style="left:88px;top:584.15px;color:#0d2c82;font-size:14.0px;font-weight:bold;transform:scaleX(1.0643);transform-origin:0 0;">test1</div>
<div class="t" style="left:134.6px;top:584.15px;color:#4d525c;font-size:14.0px;font-weight:normal;transform:scaleX(0.9643);transform-origin:0 0;">Period</div>
<div class="t" style="left:180px;top:586.15px;color:#1f1f1f;font-size:14.0px;font-weight:bold;transform:scaleX(1.0857);transform-origin:0 0;">Dec-25</div>
<div class="t" style="left:243px;top:584.15px;color:#4d525c;font-size:14.0px;font-weight:normal;transform:scaleX(0.9571);transform-origin:0 0;">Category</div>
<div class="t" style="left:304.5px;top:584.15px;color:#1f1f1f;font-size:14.0px;font-weight:bold;transform:scaleX(1.025);transform-origin:0 0;">Actual</div>
<div class="t" style="left:359.5px;top:584.15px;color:#4d525c;font-size:14.0px;font-weight:normal;transform:scaleX(0.9607);transform-origin:0 0;">Rule</div>
<div class="t" style="left:395px;top:584.15px;color:#1f1f1f;font-size:14.0px;font-weight:bold;transform:scaleX(1.0643);transform-origin:0 0;">test1</div>
<div class="t" style="left:441.3px;top:584.15px;color:#4d525c;font-size:14.0px;font-weight:normal;transform:scaleX(0.9643);transform-origin:0 0;">Source</div>
<div class="t" style="left:490.5px;top:584.15px;color:#1f1f1f;font-size:14.0px;font-weight:bold;transform:scaleX(1.0321);transform-origin:0 0;">Data Source</div>
<div class="t" style="left:588.5px;top:584.15px;color:#4d525c;font-size:14.0px;font-weight:normal;transform:scaleX(0.9429);transform-origin:0 0;">Target</div>
<div class="t" style="left:633px;top:584.15px;color:#1f1f1f;font-size:14.0px;font-weight:bold;">Test_CONSOL</div>
<div class="a" style="left:163px;top:572px;width:77px;height:34px;border:3px solid #ff3b3b;box-shadow:1px 3px 4px rgba(0,0,0,.32), inset -2px 2px 4px rgba(0,0,0,.42)"></div>
<div class="a" style="left:1594px;top:574px;width:29px;height:9px;background:#c6daf1;border:1px solid #a9c3e0"></div>
<div class="a" style="left:1604px;top:576.3px;width:0;height:0;border-left:4.7px solid transparent;border-right:4.7px solid transparent;border-top:5.7px solid #000"></div>
</body></html>
